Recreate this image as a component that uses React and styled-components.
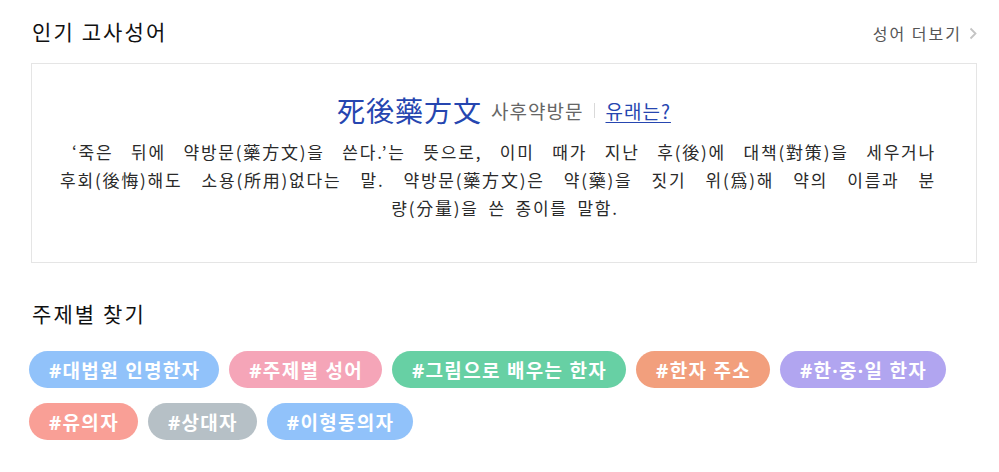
import styled, { createGlobalStyle } from 'styled-components'

const GlobalStyle = createGlobalStyle`
  html, body {
    margin: 0;
    padding: 0;
    background: #ffffff;
  }
  body {
    font-family: "Noto Sans CJK KR", "Noto Sans", sans-serif;
    color: #111111;
  }
`

const Page = styled.div`
  width: 946px;
  margin-left: 31px;
  padding-top: 18px;
`

const SectionHead = styled.div`
  display: flex;
  justify-content: space-between;
  align-items: center;
  height: 26px;
  margin-bottom: ${props => props.$gap || '19px'};
  h2{
    margin: 0;
    padding-left: 1px;
    font-size: 21px;
    font-weight: 400;
    line-height: 26px;
    letter-spacing: 2.1px;
    color: #111111;
  }
`

const MoreLink = styled.a`
  display: flex;
  align-items: center;
  gap: 7px;
  margin-top: 4px;
  font-size: 16px;
  letter-spacing: 2px;
  color: #555555;
  text-decoration: none;
  svg{
    display: block;
  }
`

const QuoteBox = styled.div`
  border: 1px solid #e5e5e5;
  padding: 28px 40px 40px 28px;
`

const TitleRow = styled.div`
  display: flex;
  justify-content: center;
  align-items: center;
  height: 36px;
  margin-left: 12px;
  .hanja{
    font-size: 28px;
    line-height: 36px;
    color: #2646b0;
    letter-spacing: 1px;
  }
  .reading{
    margin-left: 9px;
    font-size: 19px;
    color: #666666;
    letter-spacing: 1px;
  }
  .bar{
    width: 1px;
    height: 15px;
    background: #d9d9d9;
    margin: 0 10px 0 11px;
  }
  a{
    font-size: 19px;
    color: #2646b0;
    text-decoration: underline;
    text-underline-offset: 3px;
    letter-spacing: 1px;
  }
`

const Desc = styled.div`
  margin-top: 10px;
  font-size: 17px;
  line-height: 28px;
  letter-spacing: 1.8px;
  word-spacing: 4px;
  color: #2a2a2a;
`

const Line = styled.p`
  margin: 0;
  text-align: ${props => props.$last ? 'center' : 'justify'};
  text-align-last: ${props => props.$last ? 'center' : 'justify'};
  padding-left: ${props => props.$indent || '0px'};
  white-space: nowrap;
`

// hanja with its brackets, kept in one piece so justification only widens word gaps
const Hanja = styled.span`
  display: inline-block;
  word-spacing: 0;
`

const TagSection = styled.div`
  margin-top: 37px;
`

const TagList = styled.div`
  display: flex;
  flex-wrap: wrap;
  column-gap: 10px;
  row-gap: 15px;
  margin-left: -2px;
`

const Tag = styled.a`
  display: flex;
  align-items: center;
  height: 37px;
  padding: 0 19px 0 20px;
  border-radius: 19px;
  background: ${props => props.$color || '#91c2fa'};
  color: #ffffff;
  font-family: "Noto Sans", "Noto Sans CJK KR", sans-serif;
  font-size: 19px;
  font-weight: 700;
  letter-spacing: 1.3px;
  text-decoration: none;
  white-space: nowrap;
`

const tags = [
  { label: '#대법원 인명한자', color: '#91c2fa' },
  { label: '#주제별 성어', color: '#f5a5b8' },
  { label: '#그림으로 배우는 한자', color: '#67d0a4' },
  { label: '#한자 주소', color: '#f29f7d' },
  { label: '#한·중·일 한자', color: '#b1a5f0' },
  { label: '#유의자', color: '#f99f96' },
  { label: '#상대자', color: '#b6c0c6' },
  { label: '#이형동의자', color: '#91c2fa' },
]

function App(){
  return(
    <Page>
      <GlobalStyle/>
      <SectionHead>
        <h2>인기 고사성어</h2>
        <MoreLink href="#">
          성어 더보기
          <svg width="8" height="13" viewBox="0 0 8 13">
            <path d="M1.5 1.5 L6.5 6.5 L1.5 11.5" fill="none" stroke="#c4c4c4" strokeWidth="1.8"/>
          </svg>
        </MoreLink>
      </SectionHead>
      <QuoteBox>
        <TitleRow>
          <span className='hanja'>死後藥方文</span>
          <span className='reading'>사후약방문</span>
          <span className='bar'/>
          <a href="#">유래는?</a>
        </TitleRow>
        <Desc>
          <Line $indent='12px'>‘죽은 뒤에 약방문<Hanja>(藥方文)</Hanja>을 쓴다.’는 뜻으로, 이미 때가 지난 후<Hanja>(後)</Hanja>에 대책<Hanja>(對策)</Hanja>을 세우거나</Line>
          <Line>후회<Hanja>(後悔)</Hanja>해도 소용<Hanja>(所用)</Hanja>없다는 말. 약방문<Hanja>(藥方文)</Hanja>은 약<Hanja>(藥)</Hanja>을 짓기 위<Hanja>(爲)</Hanja>해 약의 이름과 분</Line>
          <Line $last $indent='14px'>량<Hanja>(分量)</Hanja>을 쓴 종이를 말함.</Line>
        </Desc>
      </QuoteBox>
      <TagSection>
        <SectionHead $gap='25px'>
          <h2>주제별 찾기</h2>
        </SectionHead>
        <TagList>
          {tags.map(t => (
            <Tag key={t.label} href="#" $color={t.color}>{t.label}</Tag>
          ))}
        </TagList>
      </TagSection>
    </Page>
  )
}
export default App
